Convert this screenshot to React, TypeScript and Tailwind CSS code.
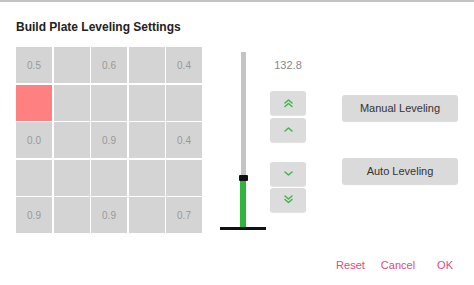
import React from "react";

const values: (string | null)[][] = [
  ["0.5", null, "0.6", null, "0.4"],
  [null, null, null, null, null],
  ["0.0", null, "0.9", null, "0.4"],
  [null, null, null, null, null],
  ["0.9", null, "0.9", null, "0.7"],
];

function Chevron({ dir, double }: { dir: "up" | "down"; double?: boolean }) {
  const up = dir === "up";
  const one = (y: number) =>
    up ? `M1 ${y + 3} L4.5 ${y} L8 ${y + 3}` : `M1 ${y} L4.5 ${y + 3} L8 ${y}`;
  return (
    <svg width="9" height="9" viewBox="0 0 9 9" fill="none" stroke="#3fb54d" strokeWidth="1.5" strokeLinecap="round" strokeLinejoin="round">
      {double ? (
        <>
          <path d={one(1)} />
          <path d={one(4.5)} />
        </>
      ) : (
        <path d={one(3)} />
      )}
    </svg>
  );
}

function SmallBtn({ children }: { children: React.ReactNode }) {
  return (
    <div className="w-[36px] h-[24px] rounded-[3px] bg-[#dcdcdc] shadow-[0_1px_1px_rgba(0,0,0,0.12)] flex items-center justify-center">
      {children}
    </div>
  );
}

function BigBtn({ label }: { label: string }) {
  return (
    <div className="w-[116px] h-[26px] rounded-[3px] bg-[#dadada] shadow-[0_1px_1px_rgba(0,0,0,0.15)] flex items-center justify-center text-[11px] text-[#333]">
      {label}
    </div>
  );
}

export default function App() {
  return (
    <div
      className="w-[474px] h-[285px] bg-white border-t-2 border-[#c2c2c2] relative overflow-hidden"
      style={{ fontFamily: '"Liberation Sans", Arial, sans-serif' }}
    >
      <div className="pl-[16px] pt-[17px] text-[12px] font-bold text-[#222] leading-[16px]">
        Build Plate Leveling Settings
      </div>
      <div className="flex pl-[16px] pt-[12px]">
        <div className="grid grid-cols-[repeat(5,36px)] grid-rows-[repeat(5,36px)] gap-[1.5px]">
          {values.map((row, r) =>
            row.map((v, c) => (
              <div
                key={`${r}-${c}`}
                className={`flex items-center justify-center text-[10px] text-[#999] ${
                  r === 1 && c === 0 ? "bg-[#ff8080]" : "bg-[#d4d4d4]"
                }`}
              >
                {v}
              </div>
            ))
          )}
        </div>
        <div className="ml-[18px] w-[46px] flex flex-col items-center pt-[5px]">
          <div className="w-[5px] h-[123px] bg-[#c4c4c4]" />
          <div className="w-[9px] h-[6px] bg-[#111] rounded-[1px]" />
          <div className="w-[6px] h-[46px] bg-[#2fb53c]" />
          <div className="w-[46px] h-[2.5px] bg-[#111]" />
        </div>
        <div className="ml-[4px] w-[36px] flex flex-col items-center">
          <div className="h-[12px] mt-[12px] text-[11px] leading-[12px] text-[#888]">132.8</div>
          <div className="mt-[20px]">
            <SmallBtn><Chevron dir="up" double /></SmallBtn>
          </div>
          <div className="mt-[2.5px]">
            <SmallBtn><Chevron dir="up" /></SmallBtn>
          </div>
          <div className="mt-[20px]">
            <SmallBtn><Chevron dir="down" /></SmallBtn>
          </div>
          <div className="mt-[2px]">
            <SmallBtn><Chevron dir="down" double /></SmallBtn>
          </div>
        </div>
        <div className="ml-[36px] flex flex-col pt-[48px]">
          <BigBtn label="Manual Leveling" />
          <div className="mt-[37px]">
            <BigBtn label="Auto Leveling" />
          </div>
        </div>
      </div>
      <div className="flex justify-end pr-[21px] mt-[25px] text-[11px] text-[#e24a7c] leading-[14px]">
        <span>Reset</span>
        <span className="ml-[16px]">Cancel</span>
        <span className="ml-[22px]">OK</span>
      </div>
    </div>
  );
}
